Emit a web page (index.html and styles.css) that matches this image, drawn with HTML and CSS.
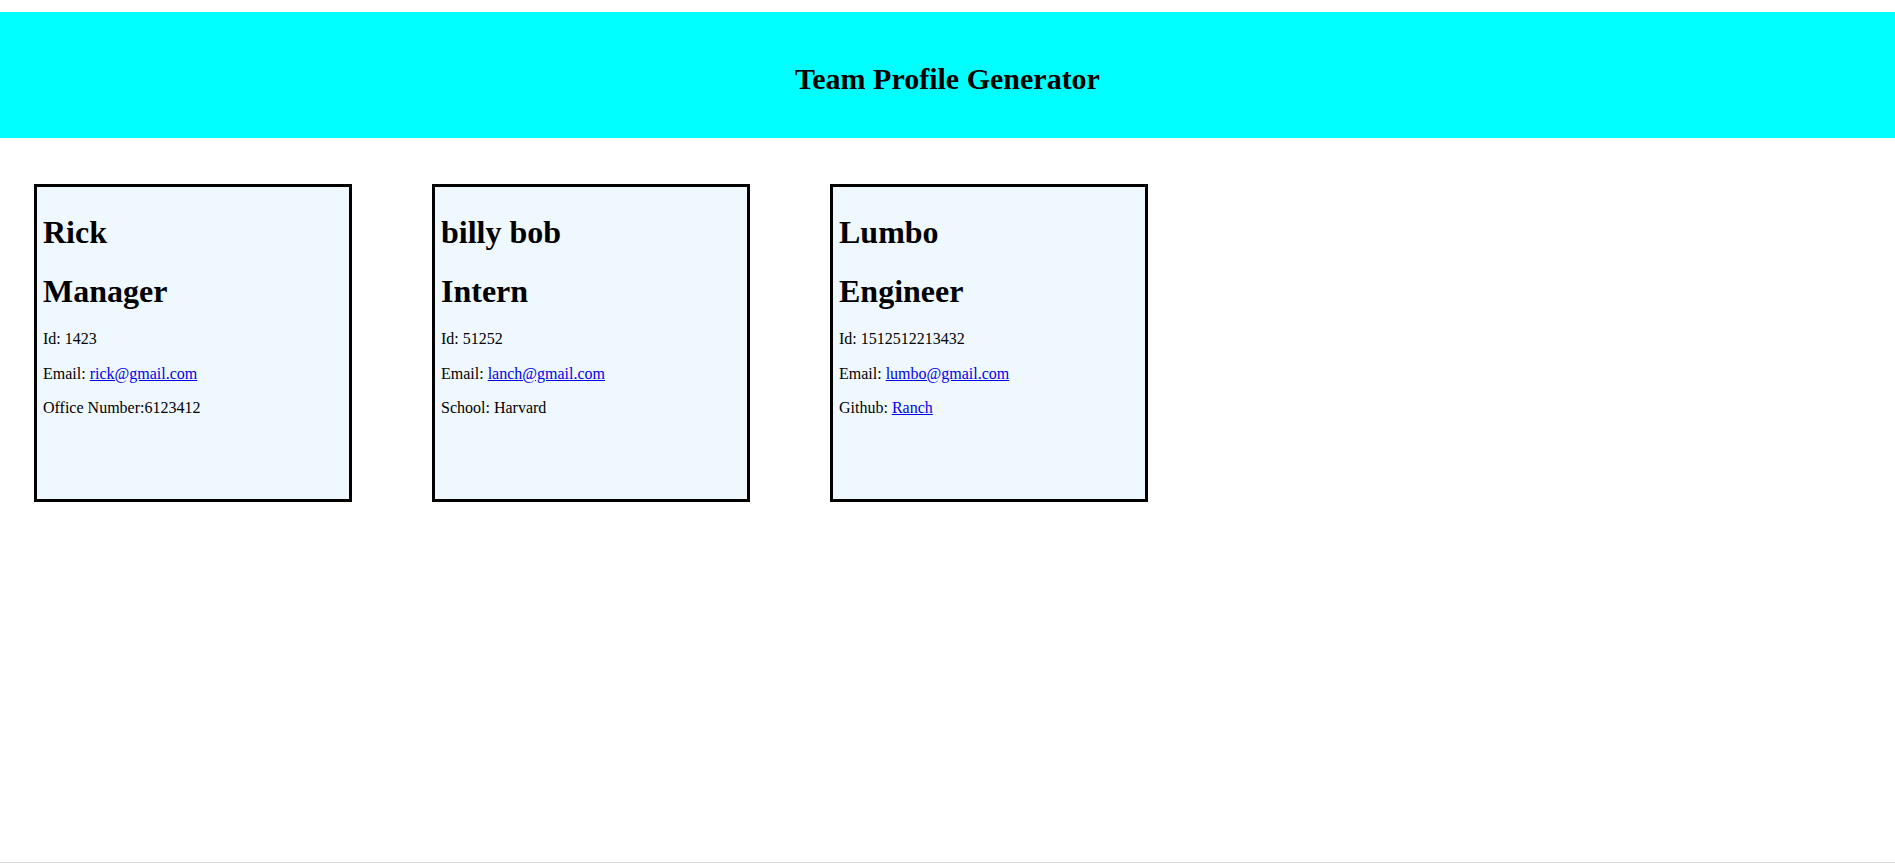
FILE: index.html
```html
<!DOCTYPE html>
<html lang="en">
<head>
<meta charset="UTF-8">
<title>Team Profile Generator</title>
<link rel="stylesheet" href="styles.css">
</head>
<body>
<header class="banner">
  <h1 class="banner-title">Team Profile Generator</h1>
</header>
<main class="team">
  <section class="card">
    <h2 class="card-name">Rick</h2>
    <h2 class="card-role">Manager</h2>
    <p class="card-line">Id: 1423</p>
    <p class="card-line">Email: <a href="#">rick@gmail.com</a></p>
    <p class="card-line">Office Number:6123412</p>
  </section>
  <section class="card">
    <h2 class="card-name">billy bob</h2>
    <h2 class="card-role">Intern</h2>
    <p class="card-line">Id: 51252</p>
    <p class="card-line">Email: <a href="#">lanch@gmail.com</a></p>
    <p class="card-line">School: Harvard</p>
  </section>
  <section class="card">
    <h2 class="card-name">Lumbo</h2>
    <h2 class="card-role">Engineer</h2>
    <p class="card-line">Id: 1512512213432</p>
    <p class="card-line">Email: <a href="#">lumbo@gmail.com</a></p>
    <p class="card-line">Github: <a href="#">Ranch</a></p>
  </section>
</main>
</body>
</html>
```
FILE: styles.css
```css
html, body {
  margin: 0;
  padding: 0;
  background: #ffffff;
}
body {
  font-family: "Liberation Serif", "Times New Roman", serif;
  color: #000000;
  min-height: 863px;
  box-sizing: border-box;
  border-bottom: 1px solid #d9d9d9;
  padding-top: 12px;
}
.banner {
  background: #00ffff;
  height: 126px;
  box-sizing: border-box;
  padding-top: 50px;
  text-align: center;
}
.banner-title {
  margin: 0;
  font-size: 30px;
  font-weight: bold;
  line-height: 34.5px;
}
.team {
  display: flex;
  gap: 80px;
  padding-left: 34px;
  margin-top: 46px;
}
.card {
  width: 318px;
  height: 318px;
  box-sizing: border-box;
  border: 3px solid #000000;
  background: #f0f8ff;
  padding: 4px 6px;
}
.card-name,
.card-role {
  font-size: 32px;
  font-weight: bold;
  line-height: 36.8px;
  margin: 22.6px 0 0 0;
}
.card-role {
  margin-bottom: 20.6px;
}
.card-line {
  font-size: 16px;
  line-height: 18.4px;
  margin: 0 0 16px 0;
}
.card-line a {
  color: #0000ee;
}
```
